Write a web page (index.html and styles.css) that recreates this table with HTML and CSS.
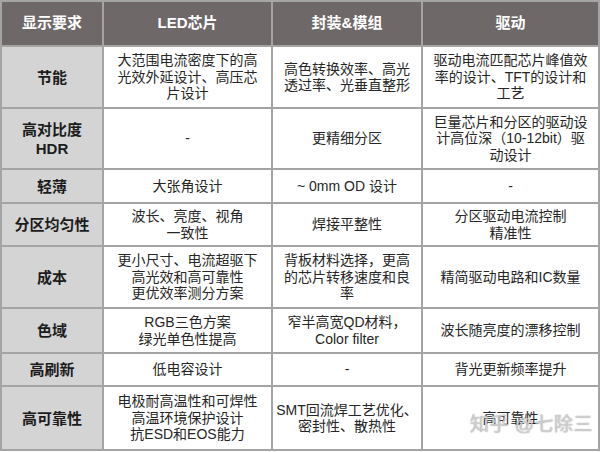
FILE: index.html
```html
<!DOCTYPE html>
<html lang="zh">
<head>
<meta charset="utf-8">
<link rel="stylesheet" href="styles.css">
</head>
<body>
<div class="page">
  <div class="table">
    <div class="cell head">显示要求</div>
    <div class="cell head">LED芯片</div>
    <div class="cell head">封装&amp;模组</div>
    <div class="cell head">驱动</div>

    <div class="cell key">节能</div>
    <div class="cell">大范围电流密度下的高<br>光效外延设计、高压芯<br>片设计</div>
    <div class="cell">高色转换效率、高光<br>透过率、光垂直整形</div>
    <div class="cell">驱动电流匹配芯片峰值效<br>率的设计、TFT的设计和<br>工艺</div>

    <div class="cell key">高对比度<br>HDR</div>
    <div class="cell">-</div>
    <div class="cell">更精细分区</div>
    <div class="cell">巨量芯片和分区的驱动设<br>计高位深（10-12bit）驱<br>动设计</div>

    <div class="cell key">轻薄</div>
    <div class="cell">大张角设计</div>
    <div class="cell">~ 0mm OD 设计</div>
    <div class="cell">-</div>

    <div class="cell key">分区均匀性</div>
    <div class="cell">波长、亮度、视角<br>一致性</div>
    <div class="cell">焊接平整性</div>
    <div class="cell">分区驱动电流控制<br>精准性</div>

    <div class="cell key">成本</div>
    <div class="cell">更小尺寸、电流超驱下<br>高光效和高可靠性<br>更优效率测分方案</div>
    <div class="cell">背板材料选择，更高<br>的芯片转移速度和良<br>率</div>
    <div class="cell">精简驱动电路和IC数量</div>

    <div class="cell key">色域</div>
    <div class="cell">RGB三色方案<br>绿光单色性提高</div>
    <div class="cell">窄半高宽QD材料，<br>Color filter</div>
    <div class="cell">波长随亮度的漂移控制</div>

    <div class="cell key">高刷新</div>
    <div class="cell">低电容设计</div>
    <div class="cell">-</div>
    <div class="cell">背光更新频率提升</div>

    <div class="cell key">高可靠性</div>
    <div class="cell">电极耐高温性和可焊性<br>高温环境保护设计<br>抗ESD和EOS能力</div>
    <div class="cell">SMT回流焊工艺优化、<br>密封性、散热性</div>
    <div class="cell">高可靠性</div>
  </div>
  <div class="watermark">知乎 @七除三</div>
</div>
</body>
</html>
```

FILE: styles.css
```css
html, body {
  margin: 0;
  padding: 0;
  background: #ffffff;
}
body {
  font-family: "Liberation Sans", "Noto Sans CJK SC", sans-serif;
  color: #262626;
}
.page {
  position: relative;
  width: 600px;
  height: 452px;
  overflow: hidden;
}
.table {
  display: grid;
  grid-template-columns: 100px 167px 148px 175px;
  grid-template-rows: 43px 60px 59px 32px 41px 60px 43px 31px 62px;
  gap: 2px;
  padding: 2px;
  background: #a4a4a4;
  width: 600px;
  box-sizing: border-box;
}
.cell {
  background: #ffffff;
  display: flex;
  align-items: center;
  justify-content: center;
  text-align: center;
  font-size: 14px;
  line-height: 16.5px;
  white-space: nowrap;
}
.head {
  background: #6e6869;
  color: #ffffff;
  font-weight: bold;
  font-size: 15px;
}
.key {
  background: #d4d4d4;
  color: #1c1c1c;
  font-weight: bold;
  font-size: 15px;
  line-height: 19px;
}
.watermark {
  position: absolute;
  left: 470px;
  top: 409px;
  font-size: 19px;
  color: rgba(255, 255, 255, 0.55);
  text-shadow: 0 0 1px rgba(120, 120, 120, 0.6), 0 0 1px rgba(120, 120, 120, 0.6);
  letter-spacing: 0.5px;
}
```
